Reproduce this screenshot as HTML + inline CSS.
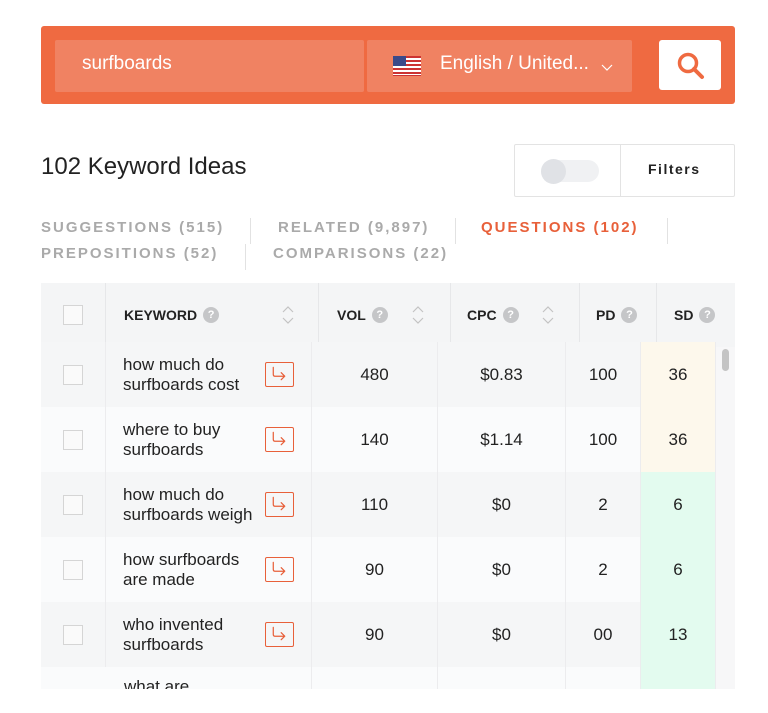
<!DOCTYPE html>
<html><head><style>
*{margin:0;padding:0;box-sizing:border-box}
body{width:768px;height:713px;background:#fff;font-family:"Liberation Sans",sans-serif;color:#222;position:relative;overflow:hidden}
.abs{position:absolute}
.bar{left:41px;top:26px;width:694px;height:78px;background:#ef6a41;border-radius:3px}
.inp{left:55px;top:40px;width:309px;height:52px;background:#f08262;border-radius:2px;color:#fff;font-size:19px;padding:13px 0 0 27px}
.lang{left:367px;top:40px;width:265px;height:52px;background:#f08262;border-radius:2px;color:#fff;font-size:19px}
.btn{left:659px;top:40px;width:62px;height:50px;background:#fff;border-radius:3px}
h1{position:absolute;left:41px;top:153px;font-size:24px;font-weight:normal;color:#222}
.filt{left:514px;top:144px;width:221px;height:53px;border:1px solid #e3e3e3;border-radius:2px}
.tab{position:absolute;font-size:15px;font-weight:bold;letter-spacing:2px;color:#aaa}
.sep{position:absolute;width:1px;height:26px;background:#e2e2e2}
.hdr{left:41px;top:283px;width:694px;height:64px;background:#f4f5f6}
.hc{position:absolute;top:0;height:64px;border-right:1px solid #e6e7e9;font-size:14px;font-weight:bold;color:#222;display:flex;align-items:center}
.q{display:inline-block;width:16px;height:16px;border-radius:50%;background:#c5c6c8;color:#fff;font-size:11px;text-align:center;line-height:16px;margin-left:6px}
.srt{position:absolute;top:22px}
.row{position:absolute;left:41px;width:675px;height:65px}
.c{position:absolute;top:0;height:65px;display:flex;align-items:center;justify-content:center;font-size:17px;color:#222;border-right:1px solid #ececee}
.cb{width:20px;height:20px;border:1px solid #d5d5d5;background:#fafafa}
.kw{justify-content:flex-start;padding-left:17px;line-height:20px;font-size:17px}
.arr{position:absolute;left:159px;top:20px;width:29px;height:25px;border:1.5px solid #e8603a;border-radius:2px}
</style></head><body>
<div class="abs bar"></div>
<div class="abs inp">surfboards</div>
<div class="abs lang">
 <svg class="abs" style="left:26px;top:16px" width="28" height="20"><rect width="28" height="20" fill="#fff"/><g fill="#c33">
 <rect y="0" width="28" height="2"/><rect y="4" width="28" height="2"/><rect y="8" width="28" height="2"/><rect y="12" width="28" height="2"/><rect y="16" width="28" height="2"/></g><rect width="13" height="10" fill="#3b4a8a"/><rect y="19" width="28" height="1" fill="#c33"/></svg>
 <span class="abs" style="left:73px;top:13px">English / United...</span>
 <svg class="abs" style="left:234px;top:24px" width="12" height="8"><path d="M1 1 L6 6 L11 1" fill="none" stroke="#fff" stroke-width="1.2"/></svg>
</div>
<div class="abs btn"><svg class="abs" style="left:17px;top:11px" width="30" height="30"><circle cx="12" cy="12" r="8.5" fill="none" stroke="#ef6a41" stroke-width="3.5"/><path d="M18 18 L26 26" stroke="#ef6a41" stroke-width="4" stroke-linecap="round"/></svg></div>
<h1>102 Keyword Ideas</h1>
<div class="abs filt">
 <div class="abs" style="left:26px;top:15px;width:58px;height:22px;border-radius:11px;background:#f0f1f3"></div>
 <div class="abs" style="left:26px;top:14px;width:25px;height:25px;border-radius:50%;background:#e0e2e6"></div>
 <div class="abs" style="left:105px;top:0;width:1px;height:51px;background:#e3e3e3"></div>
 <div class="abs" style="left:133px;top:16px;font-size:14px;font-weight:bold;letter-spacing:1.5px">Filters</div>
</div>
<div class="tab" style="left:41px;top:219px">SUGGESTIONS (515)</div>
<div class="sep" style="left:250px;top:218px"></div>
<div class="tab" style="left:278px;top:219px">RELATED (9,897)</div>
<div class="sep" style="left:455px;top:218px"></div>
<div class="tab" style="left:481px;top:219px;color:#e8603a">QUESTIONS (102)</div>
<div class="sep" style="left:667px;top:218px"></div>
<div class="tab" style="left:41px;top:245px">PREPOSITIONS (52)</div>
<div class="sep" style="left:245px;top:244px"></div>
<div class="tab" style="left:273px;top:245px">COMPARISONS (22)</div>

<div class="abs hdr">
 <div class="hc" style="left:0;width:65px;justify-content:center"><div class="cb"></div></div>
 <div class="hc" style="left:65px;width:213px;padding-left:18px">KEYWORD<span class="q">?</span><svg class="srt" style="left:176px" width="12" height="20"><path d="M1 7 L6 2 L11 7 M1 13 L6 18 L11 13" fill="none" stroke="#c3c3c3" stroke-width="1.2"/></svg></div>
 <div class="hc" style="left:278px;width:132px;padding-left:18px">VOL<span class="q">?</span><svg class="srt" style="left:93px" width="12" height="20"><path d="M1 7 L6 2 L11 7 M1 13 L6 18 L11 13" fill="none" stroke="#c3c3c3" stroke-width="1.2"/></svg></div>
 <div class="hc" style="left:410px;width:129px;padding-left:16px">CPC<span class="q">?</span><svg class="srt" style="left:91px" width="12" height="20"><path d="M1 7 L6 2 L11 7 M1 13 L6 18 L11 13" fill="none" stroke="#c3c3c3" stroke-width="1.2"/></svg></div>
 <div class="hc" style="left:539px;width:77px;padding-left:16px">PD<span class="q">?</span></div>
 <div class="hc" style="left:616px;width:78px;padding-left:17px;border:none">SD<span class="q">?</span></div>
</div>

<div class="abs" style="left:716px;top:347px;width:19px;height:342px;background:#f7f7f8"></div>
<div class="abs" style="left:722px;top:349px;width:7px;height:22px;border-radius:4px;background:#c4c4c4"></div>

<svg width="0" height="0" style="position:absolute"><defs><symbol id="ar" viewBox="0 0 29 25"><path d="M8 5 L8 13 Q8 15 10 15 L21 15 M17 11 L21 15 L17 19" fill="none" stroke="#e8603a" stroke-width="1.4" stroke-linecap="round" stroke-linejoin="round"/></symbol></defs></svg>

<div class="row" style="top:342px;background:#f5f6f7">
 <div class="c" style="left:0;width:65px"><div class="cb"></div></div>
 <div class="c kw" style="left:65px;width:206px">how much do<br>surfboards cost<div class="arr"><svg width="26" height="22" viewBox="0 0 29 25"><use href="#ar"/></svg></div></div>
 <div class="c" style="left:271px;width:126px">480</div><div class="c" style="left:397px;width:128px">$0.83</div><div class="c" style="left:525px;width:75px">100</div><div class="c" style="left:600px;width:75px;background:#fdf8ec">36</div>
</div>
<div class="row" style="top:407px;background:#fafbfc">
 <div class="c" style="left:0;width:65px"><div class="cb"></div></div>
 <div class="c kw" style="left:65px;width:206px">where to buy<br>surfboards<div class="arr"><svg width="26" height="22" viewBox="0 0 29 25"><use href="#ar"/></svg></div></div>
 <div class="c" style="left:271px;width:126px">140</div><div class="c" style="left:397px;width:128px">$1.14</div><div class="c" style="left:525px;width:75px">100</div><div class="c" style="left:600px;width:75px;background:#fdf8ec">36</div>
</div>
<div class="row" style="top:472px;background:#f5f6f7">
 <div class="c" style="left:0;width:65px"><div class="cb"></div></div>
 <div class="c kw" style="left:65px;width:206px">how much do<br>surfboards weigh<div class="arr"><svg width="26" height="22" viewBox="0 0 29 25"><use href="#ar"/></svg></div></div>
 <div class="c" style="left:271px;width:126px">110</div><div class="c" style="left:397px;width:128px">$0</div><div class="c" style="left:525px;width:75px">2</div><div class="c" style="left:600px;width:75px;background:#e3fbef">6</div>
</div>
<div class="row" style="top:537px;background:#fafbfc">
 <div class="c" style="left:0;width:65px"><div class="cb"></div></div>
 <div class="c kw" style="left:65px;width:206px">how surfboards<br>are made<div class="arr"><svg width="26" height="22" viewBox="0 0 29 25"><use href="#ar"/></svg></div></div>
 <div class="c" style="left:271px;width:126px">90</div><div class="c" style="left:397px;width:128px">$0</div><div class="c" style="left:525px;width:75px">2</div><div class="c" style="left:600px;width:75px;background:#e3fbef">6</div>
</div>
<div class="row" style="top:602px;background:#f5f6f7">
 <div class="c" style="left:0;width:65px"><div class="cb"></div></div>
 <div class="c kw" style="left:65px;width:206px">who invented<br>surfboards<div class="arr"><svg width="26" height="22" viewBox="0 0 29 25"><use href="#ar"/></svg></div></div>
 <div class="c" style="left:271px;width:126px">90</div><div class="c" style="left:397px;width:128px">$0</div><div class="c" style="left:525px;width:75px">00</div><div class="c" style="left:600px;width:75px;background:#e3fbef">13</div>
</div>
<div class="row" style="top:667px;height:22px;background:#fafbfc;overflow:hidden">
 <div class="c" style="left:65px;width:206px;height:22px;border-right:1px solid #ececee"></div>
 <div class="abs" style="left:83px;top:10px;font-size:17px">what are</div>
 <div class="c" style="left:271px;width:126px;height:22px"></div><div class="c" style="left:397px;width:128px;height:22px"></div><div class="c" style="left:525px;width:75px;height:22px"></div><div class="c" style="left:600px;width:75px;height:22px;background:#e3fbef"></div>
</div>
</body></html>
